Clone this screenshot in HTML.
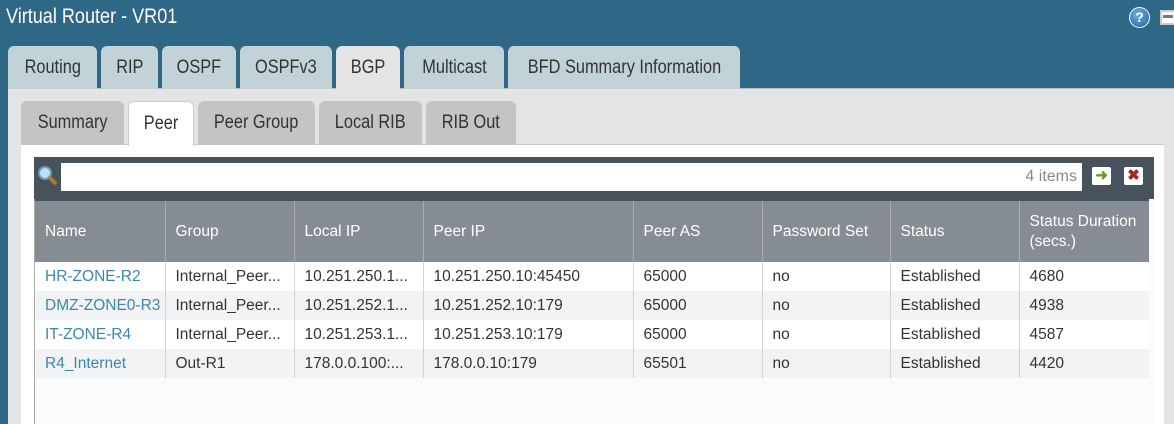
<!DOCTYPE html><html><head><style>
*{margin:0;padding:0;box-sizing:border-box}
body{width:1174px;height:424px;overflow:hidden;background:#2f6886;font-family:"Liberation Sans",sans-serif;position:relative}
.title{position:absolute;left:6px;top:5px;color:#fff;font-size:21px;transform:scaleX(0.86);transform-origin:left}
.tab{position:absolute;top:46px;height:43px;background:#c2d3d8;border-radius:6px 6px 0 0;color:#333;font-size:19px;text-align:center;line-height:43px}
.tab span,.st span{display:inline-block;transform:scaleX(0.86)}
.panel{position:absolute;left:8px;top:88px;width:1166px;height:336px;background:#e4e4e4;border-top:1px solid #bbb}
.st{position:absolute;top:101px;height:44px;background:#c4c4c4;border-radius:6px 6px 0 0;color:#333;font-size:19px;text-align:center;line-height:44px}
.content{position:absolute;left:21px;top:144px;width:1143px;height:280px;background:#fff;border-top:1px solid #c8c8c8}
.bar{position:absolute;left:34px;top:157px;width:1120px;height:42px;background:#46525c}
.inp{position:absolute;left:61px;top:163px;width:1021px;height:28px;background:#fff;color:#888;font-size:16px;text-align:right;padding-right:5px;line-height:28px}
.grid{position:absolute;left:34px;top:199px;width:1120px;height:225px;background:#fafbfb;border-left:1px solid #aaa}
table{border-collapse:collapse;font-size:15.5px;width:1114px;table-layout:fixed}
th{background:#858c93;color:#fff;font-weight:normal;text-align:left;height:62px;padding:0 10px;border-left:1px solid #a9aeb3;line-height:20px;border-top:2px solid #46525c;overflow:hidden;white-space:nowrap}
td{height:29px;padding:0 10px;color:#333;border-left:1px solid #d3d3d3;white-space:nowrap;overflow:hidden}
tr:nth-child(odd) td{background:#f2f3f4}
tr:nth-child(even) td{background:#fff}
td.n{color:#3b87ad}
</style></head><body>
<div class="title">Virtual Router - VR01</div>
<div style="position:absolute;left:1129px;top:7px;width:21px;height:21px;border-radius:50%;background:radial-gradient(circle at 40% 35%,#6fb0e0,#1f5f9c);border:1px solid #fff;color:#fff;font-size:14px;font-weight:bold;text-align:center;line-height:19px">?</div>
<div style="position:absolute;left:1160px;top:10px;width:16px;height:15px;background:#fff;border:2px solid #ccc"><div style="margin:3px 1px;height:3px;background:#777"></div></div>
<div class="panel"></div>
<div class="tab" style="left:8px;width:89px"><span>Routing</span></div>
<div class="tab" style="left:101px;width:57px"><span>RIP</span></div>
<div class="tab" style="left:162px;width:74px"><span>OSPF</span></div>
<div class="tab" style="left:240px;width:92px"><span>OSPFv3</span></div>
<div class="tab" style="left:336px;width:64px;background:#e4e4e4;height:44px"><span>BGP</span></div>
<div class="tab" style="left:404px;width:100px"><span>Multicast</span></div>
<div class="tab" style="left:508px;width:232px;white-space:nowrap"><span>BFD Summary Information</span></div>
<div class="content"></div>
<div class="st" style="left:21px;width:103px"><span>Summary</span></div>
<div class="st" style="left:128px;width:66px;background:#fff;height:45px;border:1px solid #ccc;border-bottom:none"><span>Peer</span></div>
<div class="st" style="left:198px;width:117px;white-space:nowrap"><span>Peer Group</span></div>
<div class="st" style="left:319px;width:103px"><span>Local RIB</span></div>
<div class="st" style="left:426px;width:90px"><span>RIB Out</span></div>
<div class="bar"></div>
<svg style="position:absolute;left:37px;top:165px" width="22" height="22"><circle cx="8" cy="8" r="6" fill="#bfe0f5" stroke="#6a9dc4" stroke-width="2"/><line x1="12" y1="12" x2="19" y2="19" stroke="#b07a30" stroke-width="4"/></svg>
<div class="inp">4 items</div>
<div style="position:absolute;left:1092px;top:167px;width:19px;height:18px;background:#fff;border-radius:2px;color:#6a9a1f;font-weight:bold;font-size:15px;text-align:center;line-height:18px">➜</div>
<div style="position:absolute;left:1124px;top:167px;width:19px;height:18px;background:#fff;border-radius:2px;color:#a8281a;font-weight:bold;font-size:15px;text-align:center;line-height:18px">✖</div>
<div class="grid"><table>
<colgroup><col style="width:130px"><col style="width:129px"><col style="width:129px"><col style="width:210px"><col style="width:129px"><col style="width:128px"><col style="width:129px"><col style="width:130px"></colgroup>
<tr><th style="border-left:none">Name</th><th>Group</th><th>Local IP</th><th>Peer IP</th><th>Peer AS</th><th>Password Set</th><th>Status</th><th>Status Duration<br>(secs.)</th></tr>
<tr><td class="n" style="border-left:none">HR-ZONE-R2</td><td>Internal_Peer...</td><td>10.251.250.1...</td><td>10.251.250.10:45450</td><td>65000</td><td>no</td><td>Established</td><td>4680</td></tr>
<tr><td class="n" style="border-left:none;padding-right:0">DMZ-ZONE0-R3</td><td>Internal_Peer...</td><td>10.251.252.1...</td><td>10.251.252.10:179</td><td>65000</td><td>no</td><td>Established</td><td>4938</td></tr>
<tr><td class="n" style="border-left:none">IT-ZONE-R4</td><td>Internal_Peer...</td><td>10.251.253.1...</td><td>10.251.253.10:179</td><td>65000</td><td>no</td><td>Established</td><td>4587</td></tr>
<tr><td class="n" style="border-left:none">R4_Internet</td><td>Out-R1</td><td>178.0.0.100:...</td><td>178.0.0.10:179</td><td>65501</td><td>no</td><td>Established</td><td>4420</td></tr>
</table></div>
</body></html>
